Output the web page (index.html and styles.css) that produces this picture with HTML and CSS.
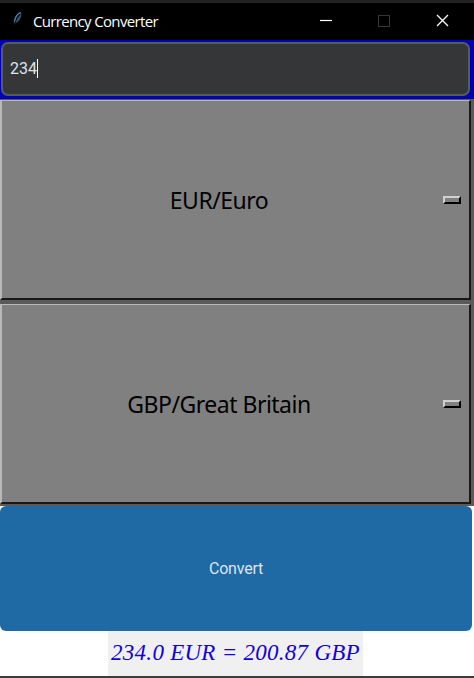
FILE: index.html
```html
<!DOCTYPE html>
<html lang="en">
<head>
    <meta charset="UTF-8">
    <meta name="viewport" content="width=device-width, initial-scale=1.0">
    <title>Currency Converter</title>
    <link rel="stylesheet" href="styles.css">
</head>
<body>
    <div class="window">
        <div class="titlebar">
            <svg class="feather" width="10" height="16" viewBox="0 0 10 16">
                <path d="M1 14C0 8 3 2 8 1C9 5 7 10 3 12Z" fill="#315779"/>
                <path d="M1.5 15C2 10 4 6 7 3" fill="none" stroke="#05080c" stroke-width="1.3"/>
                <path d="M1.5 11C2 6 4 3 7.5 1.5" fill="none" stroke="#7893aa" stroke-width=".8"/>
            </svg>
            <span class="title">Currency Converter</span>
            <svg class="controls" width="132" height="16" viewBox="0 0 132 16" fill="none">
                <path d="M1 7.5H13" stroke="#fff" stroke-width="1.2"/>
                <rect x="59.5" y="2.5" width="11" height="11" stroke="#373737"/>
                <path d="M118 2L129 13M129 2L118 13" stroke="#fff" stroke-width="1.3"/>
            </svg>
        </div>
        <div class="entry-row">
            <div class="entry"><span class="amount">234</span><span class="caret"></span></div>
        </div>
        <div class="menus">
            <div class="menu">
                <span class="from">EUR/Euro</span>
                <span class="indicator"></span>
            </div>
            <div class="menu">
                <span class="to">GBP/Great Britain</span>
                <span class="indicator"></span>
            </div>
        </div>
        <div class="button-row">
            <button class="convert">Convert</button>
        </div>
        <div class="output">
            <div class="result">234.0 EUR = 200.87 GBP</div>
        </div>
    </div>
</body>
</html>
```

FILE: styles.css
```css
* {
    box-sizing: border-box;
}
body {
    margin: 0;
    background: #fff;
}
.window {
    display: flex;
    flex-direction: column;
    width: 474px;
    height: 678px;
    overflow: hidden;
    border-top: 3px solid #222;
    border-bottom: 2px solid #3c3c3c;
}
.titlebar {
    display: flex;
    align-items: center;
    height: 37px;
    padding: 0 23px 1px 13px;
    background: #000;
    color: #fff;
    font: 15px "Open Sans", sans-serif;
}
.feather {
    margin-bottom: 4px;
}
.title {
    margin-left: 10px;
    letter-spacing: -0.66px;
    white-space: nowrap;
}
.controls {
    margin-left: auto;
}
.entry-row {
    height: 59px;
    padding: 2px 4px 3px 1px;
    background: #0000b8;
}
.entry {
    display: flex;
    align-items: center;
    height: 54px;
    padding: 0 0 2px 7px;
    background: #343638;
    border: 2px solid #565b5e;
    border-radius: 7px;
    color: #dce4ee;
    font: 16px Roboto, sans-serif;
}
.caret {
    width: 1px;
    height: 19px;
    background: #fff;
}
.menus {
    display: flex;
    flex-direction: column;
    gap: 4px;
    height: 407px;
    padding: 1px 3px 2px 0;
    background: #5a5a5a;
}
.menu {
    display: flex;
    align-items: center;
    height: 200px;
    padding: 0 8px 0 0;
    background: #808080;
    border-style: solid;
    border-width: 1px 2px 2px 2px;
    border-color: #b8b8b8 #181818 #181818 #b8b8b8;
    color: #000;
    font: 23px "Noto Sans", sans-serif;
}
.from,
.to {
    flex: 1;
    padding-right: 7px;
    letter-spacing: -0.5px;
    text-align: center;
    white-space: nowrap;
}
.indicator {
    width: 18px;
    height: 8px;
    background: #808080;
    border: 2px solid;
    border-color: #d0d0d0 #000 #000 #d0d0d0;
}
.button-row {
    height: 125px;
    padding-right: 2px;
}
.convert {
    display: block;
    width: 100%;
    height: 125px;
    padding: 0;
    background: #1f6aa5;
    border: none;
    border-radius: 6px;
    color: #dce4ee;
    font: 16px Roboto, sans-serif;
    letter-spacing: -0.2px;
}
.output {
    display: flex;
    flex: 1;
    padding-left: 108px;
}
.result {
    width: 255px;
    background: #f0f0f0;
    color: #1200d8;
    font: italic 23px/44px "Liberation Serif", serif;
    letter-spacing: 0.27px;
    text-align: center;
    white-space: nowrap;
}
```
